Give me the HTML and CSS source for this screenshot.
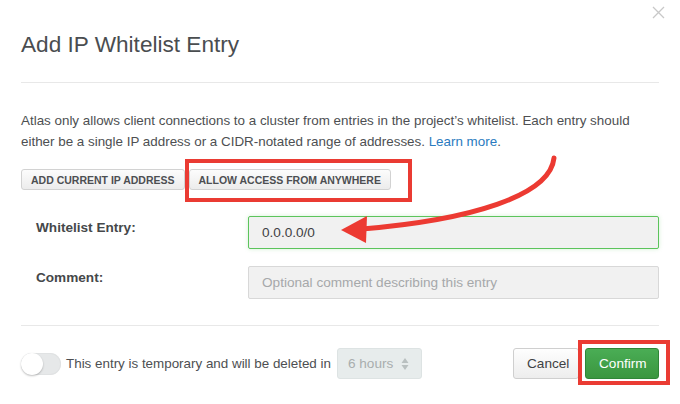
FILE: index.html
```html
<!DOCTYPE html>
<html>
<head>
<meta charset="utf-8">
<link rel="stylesheet" href="styles.css">
</head>
<body>
<div class="modal">
  <button class="close" aria-label="Close">
    <svg width="13" height="13" viewBox="0 0 13 13"><path d="M1 1L12 12M12 1L1 12" stroke="#c8c8c8" stroke-width="1.3" fill="none"/></svg>
  </button>
  <div class="header">
    <h1 class="title">Add IP Whitelist Entry</h1>
  </div>
  <p class="intro">Atlas only allows client connections to a cluster from entries in the project’s whitelist. Each entry should either be a single IP address or a CIDR-notated range of addresses. <a class="link" href="#">Learn more</a>.</p>
  <div class="actions">
    <button class="btn-small">ADD CURRENT IP ADDRESS</button>
    <button class="btn-small">ALLOW ACCESS FROM ANYWHERE</button>
  </div>
  <div class="form">
    <div class="row">
      <label class="label">Whitelist Entry:</label>
      <div class="input input-valid">0.0.0.0/0</div>
    </div>
    <div class="row">
      <label class="label">Comment:</label>
      <div class="input placeholder">Optional comment describing this entry</div>
    </div>
  </div>
  <div class="footer">
    <div class="temp">
      <span class="toggle"><span class="knob"></span></span>
      <span class="temp-text">This entry is temporary and will be deleted in</span>
      <span class="select">6 hours
        <svg class="caret" width="8" height="14" viewBox="0 0 8 14"><path d="M4 1L7.5 6H0.5Z M4 13L7.5 8H0.5Z" fill="#b9c0c0"/></svg>
      </span>
    </div>
    <div class="buttons">
      <button class="btn btn-cancel">Cancel</button>
      <button class="btn btn-confirm">Confirm</button>
    </div>
  </div>
  <div class="hl hl-allow"></div>
  <div class="hl hl-confirm"></div>
  <svg class="arrow" width="680" height="404" viewBox="0 0 680 404">
    <path d="M554 158 C 550 196, 470 220, 362 229" stroke="#ec3a32" stroke-width="5" fill="none" stroke-linecap="round"/>
    <path d="M341 230 L367 216 L366 243 Z" fill="#ec3a32"/>
  </svg>
</div>
</body>
</html>
```
FILE: styles.css
```css
* { box-sizing: border-box; }
html, body { margin: 0; padding: 0; background: #fff; }
body {
  font-family: "Liberation Sans", Arial, sans-serif;
  color: #494b4d;
  width: 680px;
  height: 404px;
  overflow: hidden;
}
.modal {
  position: relative;
  width: 680px;
  height: 404px;
  padding: 0 21px;
}
.close {
  position: absolute;
  top: 6px;
  right: 15px;
  border: 0;
  background: none;
  padding: 0;
  width: 13px;
  height: 13px;
  display: block;
}
.close svg { display: block; }
.header {
  padding-top: 30px;
  padding-bottom: 22px;
  border-bottom: 1px solid #e8e8e8;
}
.title {
  margin: 0;
  font-size: 22.6px;
  line-height: 30px;
  font-weight: normal;
  color: #4a4d50;
}
.intro {
  margin: 27px 0 0;
  font-size: 13.4px;
  line-height: 21px;
  color: #4d4f52;
}
.link { color: #2a7bc0; text-decoration: none; }
.actions {
  display: flex;
  gap: 4px;
  margin-top: 17px;
}
.btn-small {
  height: 21px;
  padding: 0 9px;
  font-family: inherit;
  font-size: 10.5px;
  font-weight: bold;
  color: #4d4f52;
  background: linear-gradient(#fcfcfc, #ececec);
  border: 1px solid #d2d2d2;
  border-radius: 3px;
}
.form {
  margin-top: 26px;
  display: flex;
  flex-direction: column;
  gap: 17px;
}
.row {
  display: flex;
  align-items: flex-start;
}
.label {
  width: 227px;
  padding-left: 15px;
  padding-top: 4px;
  font-size: 13.6px;
  font-weight: bold;
  color: #45484a;
}
.input {
  flex: 1;
  height: 33px;
  line-height: 31px;
  padding: 0 13px;
  background: #f1f1f1;
  border: 1px solid #d8d8d8;
  border-radius: 2px;
  font-size: 13.6px;
  color: #3f4244;
}
.input-valid {
  border-color: #5cc45c;
  box-shadow: 0 0 4px rgba(92, 196, 92, 0.25);
}
.placeholder { color: #a6a8aa; }
.footer {
  margin-top: 26px;
  border-top: 1px solid #e8e8e8;
  padding-top: 22px;
  display: flex;
  justify-content: space-between;
  align-items: center;
}
.temp {
  display: flex;
  align-items: center;
}
.toggle {
  position: relative;
  width: 40px;
  height: 22px;
  border-radius: 11px;
  background: #e6e8e9;
  box-shadow: inset 0 0 0 1px #e0e2e3;
  margin-right: 5px;
}
.knob {
  position: absolute;
  left: 0;
  top: 0;
  width: 22px;
  height: 22px;
  border-radius: 50%;
  background: #fff;
  box-shadow: 0 1px 2px rgba(0,0,0,0.25);
}
.temp-text {
  font-size: 13.4px;
  color: #4d4f52;
  margin-right: 6px;
}
.select {
  width: 85px;
  height: 31px;
  display: flex;
  align-items: center;
  gap: 8px;
  padding-left: 10px;
  background: #e7ecec;
  border: 1px solid #dde3e3;
  border-radius: 3px;
  font-size: 13.6px;
  color: #a9aeae;
}
.buttons {
  display: flex;
  gap: 6px;
}
.btn {
  height: 31px;
  font-family: inherit;
  font-size: 13.6px;
  border-radius: 3px;
  padding: 0 13px;
}
.btn-cancel {
  width: 66px;
  color: #3f4244;
  background: linear-gradient(#fefefe, #ededed);
  border: 1px solid #cfcfcf;
}
.btn-confirm {
  width: 74px;
  color: #fff;
  background: linear-gradient(#4aad55, #3a963f);
  border: 1px solid #2f8637;
}
.hl {
  position: absolute;
  border: 4.5px solid #ea3b33;
}
.hl-allow { left: 185px; top: 159px; width: 227px; height: 43px; }
.hl-confirm { left: 578px; top: 340px; width: 92px; height: 45px; }
.arrow { position: absolute; left: 0; top: 0; pointer-events: none; }
```
